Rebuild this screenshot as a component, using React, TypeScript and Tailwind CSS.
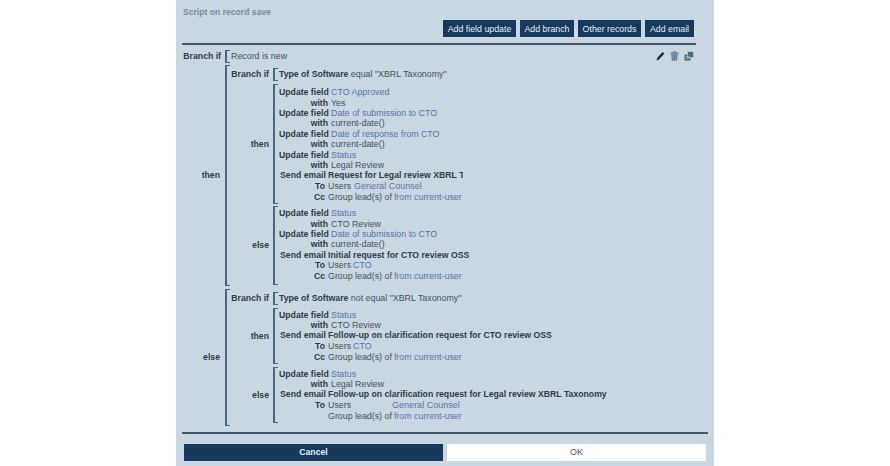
import React from "react";

const link = "text-[#5d70ad]";
const bold = "whitespace-nowrap font-bold text-[8.7px] text-[#2f3b47]";

function Bracket({ className = "" }: { className?: string }) {
  return <div className={`w-[5px] shrink-0 self-stretch border-y-[1.5px] border-l-2 border-[#4a6782] ${className}`} />;
}

function Row({ label, children, wide, tall }: { label?: string; children: React.ReactNode; wide?: boolean; tall?: boolean }) {
  return (
    <div className={`flex ${tall ? "h-[11px]" : "h-[10.4px]"} items-center whitespace-nowrap`}>
      <div className={`${wide ? "w-[45px]" : "w-[49px]"} mr-[3px] shrink-0 text-right ${bold}`}>{label}</div>
      {children}
    </div>
  );
}

function Update({ field, value }: { field: string; value: string }) {
  return (
    <>
      <Row label="Update field"><span className={link}>{field}</span></Row>
      <Row label="with"><span>{value}</span></Row>
    </>
  );
}

function Email({ subject, clip, to, toGap, cc = "Cc", big }: { subject: string; clip?: boolean; to: string; toGap: string; cc?: string; big?: boolean }) {
  return (
    <div className="pl-px">
      <Row wide label="Send email">
        <span className={`block ${bold} ${clip ? "w-[135px] overflow-hidden" : ""}`}>{subject}</span>
      </Row>
      <Row wide tall label="To">
        <span>Users</span>
        <span className={`${toGap} ${link} ${big ? "text-[9px]" : ""}`}>{to}</span>
      </Row>
      <Row wide label={cc}>
        <span>Group lead(s) of</span>
        <span className={`ml-[2px] ${link}`}>from current-user</span>
      </Row>
    </div>
  );
}

function Arm({ label, height, children, mt, pad = "" }: { label: string; height: string; children: React.ReactNode; mt: string; pad?: string }) {
  return (
    <div className={`flex ${mt} ${height}`}>
      <div className={`flex w-[38px] shrink-0 items-center justify-end ${bold}`}>{label}</div>
      <Bracket className="ml-[4px]" />
      <div className={`ml-[1px] flex flex-1 flex-col justify-center ${pad}`}>{children}</div>
    </div>
  );
}

function Condition({ name, op }: { name: string; op: string }) {
  return (
    <div className="flex h-[13px] items-center">
      <div className={`w-[38px] shrink-0 text-right ${bold}`}>Branch if</div>
      <Bracket className="ml-[4px]" />
      <div className="ml-[1px] whitespace-nowrap">
        <span className={bold}>{name}</span> {op}
      </div>
    </div>
  );
}

function Outer({ label, height, mt, children }: { label: string; height: string; mt: string; children: React.ReactNode }) {
  return (
    <div className={`flex ${height} ${mt}`}>
      <div className={`flex w-[38px] shrink-0 items-center justify-end pr-px ${bold}`}>{label}</div>
      <Bracket className="ml-[4px]" />
      <div className="ml-[1px] flex flex-1 flex-col pt-[3px]">{children}</div>
    </div>
  );
}

function Btn({ children, w }: { children: string; w: string }) {
  return (
    <button className={`${w} h-[17px] bg-[#153a5e] text-center text-[8.8px] text-[#e9eef3]`}>{children}</button>
  );
}

export default function App() {
  return (
    <div className="flex h-[466px] w-[890px] justify-center overflow-hidden bg-white font-['Liberation_Sans',Arial,sans-serif] text-[8.85px] leading-[10.4px] text-[#46525e]">
      <div className="flex h-[466px] w-[538px] flex-col bg-[#c9d7e3] pl-[6px]">
        <div className="pl-px pt-[7px] text-[8.5px] font-bold tracking-[0.05px] text-[#7f8d99]">Script on record save</div>
        <div className="mt-[3px] flex w-[512px] justify-end gap-[4px]">
          <Btn w="w-[73px]">Add field update</Btn>
          <Btn w="w-[54px]">Add branch</Btn>
          <Btn w="w-[63px]">Other records</Btn>
          <Btn w="w-[49px]">Add email</Btn>
        </div>
        <div className="mt-[5.5px] h-[2px] w-[514px] bg-[#44586b]" />

        <div className="mt-[5px] flex h-[13px] items-center pl-px">
          <div className={`w-[38px] shrink-0 text-right ${bold}`}>Branch if</div>
          <Bracket className="ml-[4px]" />
          <div className="ml-px flex-1">Record is new</div>
          <div className="mr-[20px] flex items-center gap-[5px]">
            <svg width="9" height="10" viewBox="0 0 9 10"><path d="M6.5 1 L8.3 2.8 L3 8.6 L0.6 9.4 L1.2 6.9 Z" fill="#1f2d3a" /></svg>
            <svg width="9" height="10" viewBox="0 0 9 10" fill="#5a7186"><rect x="0.5" y="1.5" width="8" height="1.2" /><rect x="3" y="0.4" width="3" height="1.2" /><path d="M1.3 3.2 H7.7 L7.1 9.6 H1.9 Z" /><path d="M3.2 4 V8.8 M5.8 4 V8.8" stroke="#c9d7e3" strokeWidth="0.6" /></svg>
            <svg width="10" height="10" viewBox="0 0 10 10" fill="#51677c"><rect x="0.5" y="3.5" width="6" height="6" /><rect x="3.5" y="0.5" width="6" height="6" stroke="#c9d7e3" strokeWidth="0.6" /><path d="M1.5 5.5 H5.5 M1.5 7.5 H5.5" stroke="#c9d7e3" strokeWidth="0.5" /></svg>
          </div>
        </div>

        <div className="pl-px">
          <Outer label="then" height="h-[221px]" mt="mt-[2px]">
            <Condition name="Type of Software" op={'equal "XBRL Taxonomy"'} />
            <Arm label="then" height="h-[120px]" mt="mt-[3px]" pad="pt-[1.5px]">
              <Update field="CTO Approved" value="Yes" />
              <Update field="Date of submission to CTO" value="current-date()" />
              <Update field="Date of response from CTO" value="current-date()" />
              <Update field="Status" value="Legal Review" />
              <Email subject="Request for Legal review XBRL Taxonomy" clip to="General Counsel" toGap="ml-[3px]" big />
            </Arm>
            <Arm label="else" height="h-[79px]" mt="mt-[2px]" pad="pb-[1px]">
              <Update field="Status" value="CTO Review" />
              <Update field="Date of submission to CTO" value="current-date()" />
              <Email subject="Initial request for CTO review OSS" to="CTO" toGap="ml-[2px]" />
            </Arm>
          </Outer>

          <Outer label="else" height="h-[137px]" mt="mt-[3px]">
            <Condition name="Type of Software" op={'not equal "XBRL Taxonomy"'} />
            <Arm label="then" height="h-[56px]" mt="mt-[3px]">
              <Update field="Status" value="CTO Review" />
              <Email subject="Follow-up on clarification request for CTO review OSS" to="CTO" toGap="ml-[2px]" />
            </Arm>
            <Arm label="else" height="h-[56px]" mt="mt-[3px]">
              <Update field="Status" value="Legal Review" />
              <Email subject="Follow-up on clarification request for Legal review XBRL Taxonomy" to="General Counsel" toGap="ml-[41px]" big cc="" />
            </Arm>
          </Outer>
        </div>

        <div className="mt-[6px] h-[2px] w-[526px] bg-[#44586b]" />
        <div className="mt-[10px] flex gap-[4px] pl-[2px]">
          <button className="h-[17px] w-[259px] bg-[#153a5e] text-center text-[8.7px] font-bold text-[#e9eef3]">Cancel</button>
          <button className="h-[17px] w-[259px] bg-white text-center text-[8.9px] text-[#46525e]">OK</button>
        </div>
      </div>
    </div>
  );
}
